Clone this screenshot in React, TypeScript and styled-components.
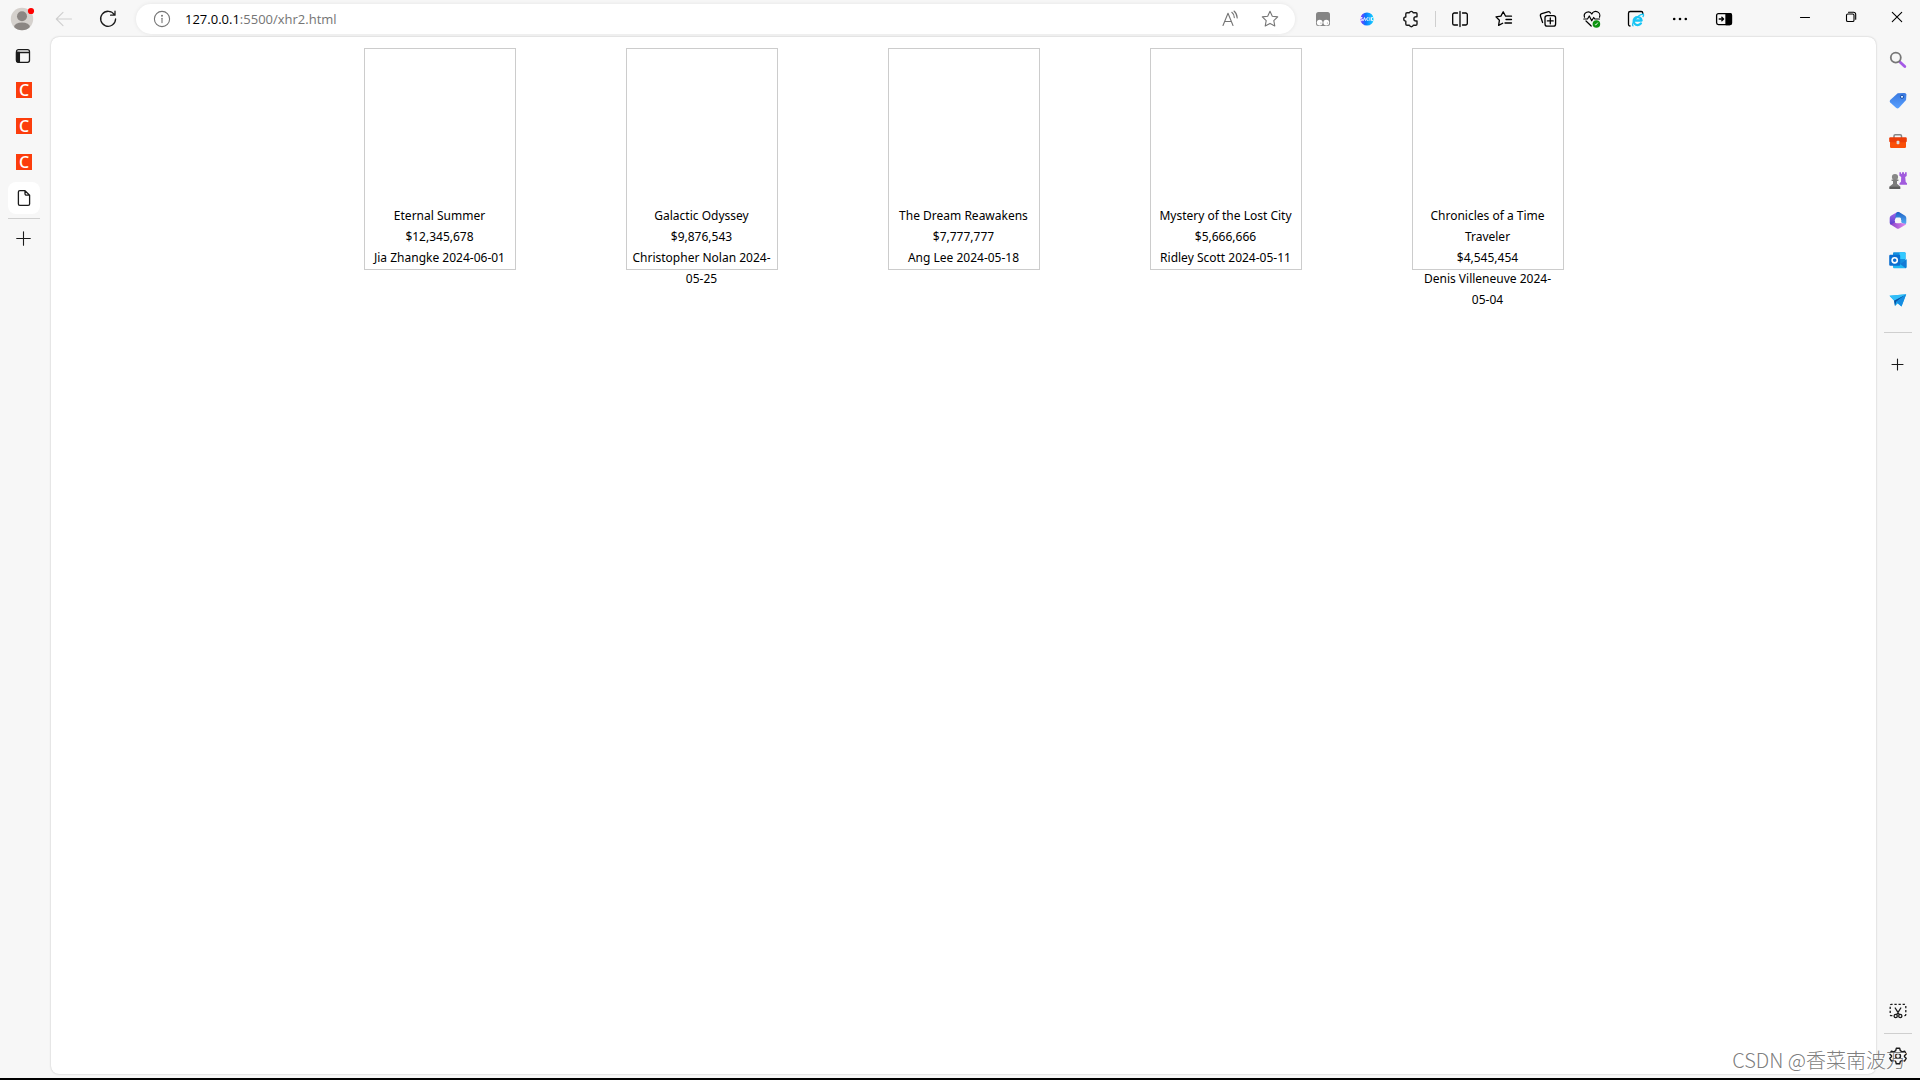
import React from "react";
import styled, { createGlobalStyle, css } from "styled-components";

const GlobalStyle = createGlobalStyle`
  *, *::before, *::after { box-sizing: border-box; }
  html, body, #root { height: 100%; }
  body {
    margin: 0;
    background: #f7f7f7;
    color: #000;
    font-family: "Noto Sans", "Noto Sans CJK SC", sans-serif;
    font-size: 12px;
  }
  button, input { font: inherit; }
`;

const Window = styled.div`
  position: relative;
  display: flex;
  flex-direction: column;
  height: 100vh;
  overflow: hidden;
  background: #f7f7f7;
  border-bottom: 2px solid #000;
`;

const TopBar = styled.header`
  display: flex;
  align-items: center;
  flex: none;
  height: 37px;
  padding: 1px 0 0 2px;
`;

const iconSlot = css`
  display: flex;
  align-items: center;
  justify-content: center;
  flex: none;
  padding: 0;
  border: 0;
  background: transparent;
  color: #1b1b1b;
`;

const ToolButton = styled.button<{ $tone?: string; $width?: number }>`
  ${iconSlot}
  width: ${(p) => p.$width ?? 44}px;
  height: 32px;
  color: ${(p) => p.$tone ?? "#1b1b1b"};
`;

const AddressBar = styled.label`
  display: flex;
  align-items: center;
  flex: 1;
  min-width: 0;
  height: 30px;
  margin: 0 6px;
  padding: 0 5px 0 6px;
  border-radius: 15px;
  background: #fff;
  box-shadow: 0 0 4px rgba(0, 0, 0, 0.08);
  font-family: "Open Sans", "Noto Sans", sans-serif;
  font-size: 13px;
`;

const Host = styled.span`
  color: #000;
`;

const AddressInput = styled.input`
  flex: 1;
  min-width: 0;
  padding: 0;
  border: 0;
  outline: 0;
  background: transparent;
  color: #757575;
`;

const InfoButton = styled(ToolButton)`
  margin-right: 3px;
`;

const ToolGroup = styled.div`
  display: flex;
  align-items: center;
`;

const ToolDivider = styled.span`
  width: 1px;
  height: 16px;
  margin: 0 2px;
  background: #cfcfcf;
`;

const WindowControls = styled.div`
  display: flex;
  margin-left: 36px;
  padding-bottom: 4px;
`;

const Body = styled.div`
  display: flex;
  flex: 1;
  min-height: 0;
`;

const TabRail = styled.nav`
  display: flex;
  flex-direction: column;
  flex: none;
  width: 51px;
  padding: 3px 11px 0 8px;
`;

const RailButton = styled.button<{ $active?: boolean }>`
  ${iconSlot}
  width: 32px;
  height: 32px;
  margin-bottom: 4px;
  border-radius: 8px;
  background: ${(p) => (p.$active ? "#fff" : "transparent")};
`;

const WorkspaceButton = styled(RailButton)`
  margin-bottom: 2px;
  padding-right: 2px;
`;

const RailDivider = styled.hr`
  width: 100%;
  height: 1px;
  margin: 0 0 4px;
  border: 0;
  background: #cfcfcf;
`;

const CsdnMark = styled.span`
  display: flex;
  align-items: center;
  justify-content: center;
  width: 16px;
  height: 16px;
  background: #fc3d0c;
  color: #fff;
  font-size: 16px;
  font-weight: 500;
  line-height: 16px;
`;

const Page = styled.main`
  flex: 1;
  min-width: 0;
  margin-bottom: 4px;
  padding-top: 11px;
  border-radius: 8px;
  background: #fff;
  box-shadow: 0 0 2px rgba(0, 0, 0, 0.25);
`;

const FilmList = styled.ul`
  display: flex;
  justify-content: center;
  gap: 110px;
  margin: 0;
  padding: 0;
  list-style: none;
`;

const FilmCard = styled.li`
  width: 152px;
  height: 222px;
  padding: 156px 3px 0;
  border: 1px solid #ccc;
  line-height: 21px;
  text-align: center;
`;

const FilmLine = styled.p`
  margin: 0;
`;

const AppRail = styled.aside`
  display: flex;
  flex-direction: column;
  align-items: center;
  flex: none;
  width: 44px;
  padding: 3px 0 2px;
`;

const AppButton = styled.button`
  ${iconSlot}
  width: 40px;
  height: 40px;
`;

const AppDivider = styled.hr<{ $gap: number }>`
  width: 28px;
  height: 1px;
  margin: ${(p) => p.$gap}px 0;
  border: 0;
  background: #cfcfcf;
`;

const Spacer = styled.div`
  flex: 1;
`;

const Watermark = styled.div`
  position: absolute;
  right: 14px;
  bottom: 2px;
  color: rgba(110, 110, 110, 0.9);
  font-family: "Noto Sans CJK SC", sans-serif;
  font-size: 20px;
  font-weight: 300;
  line-height: 32px;
  text-shadow: 1px 1px 0 rgba(255, 255, 255, 0.8);
  white-space: nowrap;
  pointer-events: none;
`;

type IconProps = { size?: number; width?: number; children: React.ReactNode };

const Icon = ({ size = 20, width = 1.1, children }: IconProps) => (
  <svg
    width={size}
    height={size}
    viewBox="0 0 20 20"
    fill="none"
    stroke="currentColor"
    strokeWidth={width}
    strokeLinecap="round"
    strokeLinejoin="round"
    aria-hidden="true"
  >
    {children}
  </svg>
);

const Avatar = () => (
  <svg width="26" height="26" viewBox="0 0 26 26" aria-hidden="true">
    <defs>
      <clipPath id="face">
        <circle cx="13" cy="13" r="11.2" />
      </clipPath>
    </defs>
    <circle cx="13" cy="13" r="11.2" fill="#d5d1cd" />
    <g clipPath="url(#face)" fill="#8b8683">
      <circle cx="13" cy="10.2" r="5" />
      <ellipse cx="13" cy="21.4" rx="8" ry="5" />
    </g>
    <circle cx="22" cy="5" r="3.1" fill="#f00" />
  </svg>
);

const BackIcon = () => (
  <Icon><path d="M17.5 10H2.5M9 3.3L2.3 10L9 16.7" /></Icon>
);
const ReloadIcon = () => (
  <Icon width={1.3}><path d="M16.4 5.7A7.5 7.5 0 1 0 17.6 10M17 2.2V6.2H12.6" /></Icon>
);
const InfoIcon = () => (
  <Icon><circle cx="10" cy="10" r="7.6" /><path d="M10 9.2V13.6" /><circle cx="10" cy="6.7" r=".45" fill="currentColor" /></Icon>
);
const ReadIcon = () => (
  <Icon><path d="M3 16.5L8 4.2L13 16.5M4.7 12.5H11.3M11.8 3.3A6.5 6.5 0 0 1 14.3 8.6M14 2A9.5 9.5 0 0 1 17.2 9" /></Icon>
);
const starPath = "M10 2.3L12.3 7.2L17.7 7.9L13.8 11.6L14.8 17L10 14.4L5.2 17L6.2 11.6L2.3 7.9L7.7 7.2Z";
const StarIcon = () => <Icon><path d={starPath} /></Icon>;
const MonkeyIcon = () => (
  <svg width="16" height="16" viewBox="0 0 16 16" aria-hidden="true">
    <rect x="1" y="1" width="14" height="14" rx="2.5" fill="#858585" />
    <circle cx="4.7" cy="11.6" r="2.9" fill="#fff" />
    <circle cx="11.3" cy="11.6" r="2.9" fill="#fff" />
    <circle cx="5.9" cy="12" r=".6" fill="#999" />
    <circle cx="12.4" cy="12" r=".6" fill="#999" />
  </svg>
);
const BubbleIcon = () => (
  <svg width="16" height="16" viewBox="0 0 16 16" aria-hidden="true">
    <defs>
      <linearGradient id="bubble" x1="0" y1="0" x2="1" y2="0">
        <stop stopColor="#8a32ff" />
        <stop offset=".4" stopColor="#0878ff" />
        <stop offset="1" stopColor="#18d5ff" />
      </linearGradient>
    </defs>
    <circle cx="8" cy="8" r="6.6" fill="url(#bubble)" />
    <path d="M1.5 9.7H3.3V8H1.8V6.5H3.4M4.3 9.8L5.5 6.6L6.7 9.8M9.6 6.8Q7.8 6.1 7.6 8Q7.7 10 9.6 9.3M10.9 6.3V9.8M13.8 6.5H12.5V9.6H14" fill="none" stroke="#fff" strokeWidth=".9" />
  </svg>
);
const PuzzleIcon = () => (
  <Icon width={1.4}><path d="M6 3.8H8.4A2 2 0 0 1 12.2 3.8H15A1 1 0 0 1 16 4.8V7.8H15A2 2 0 0 0 15 12H16V15A1.2 1.2 0 0 1 14.8 16.2H12.3A2 2 0 0 1 8.4 16.2H6A1.2 1.2 0 0 1 4.8 15V12.1A2 2 0 0 1 4.8 8V5A1.2 1.2 0 0 1 6 3.8Z" /></Icon>
);
const SplitIcon = () => (
  <Icon width={1.3}><path d="M10 2.5V17.5M7.5 4H4.3A1.6 1.6 0 0 0 2.7 5.6V14.4A1.6 1.6 0 0 0 4.3 16H7.5M12.5 4H15.7A1.6 1.6 0 0 1 17.3 5.6V14.4A1.6 1.6 0 0 1 15.7 16H12.5" /></Icon>
);
const FavoritesIcon = () => (
  <Icon width={1.3}><path d="M17.5 7.2H11.6L9.2 2.8L6.9 7.1L2 7.9L5.4 11.3L4.6 16.4L8.7 14.2M12 10.5H17.5M11 14H17.5" /></Icon>
);
const CollectionsIcon = () => (
  <Icon width={1.3}><rect x="7" y="6.6" width="10.6" height="10.6" rx="2.2" /><path d="M12.3 9V14.8M9.4 11.9H15.2M4.6 13.5L2.5 7.2A2 2 0 0 1 3.8 4.7L9.8 2.8A2 2 0 0 1 12.3 4.1" /></Icon>
);
const HealthIcon = () => (
  <Icon width={1.2}>
    <path d="M2.5 8.2A4 4 0 0 1 9.8 5A4 4 0 0 1 17.5 8.2M1.8 10H5.5L7.3 7L9.7 11.8L11.7 8.5L12.8 10H17.5M4 12L9.2 17" />
    <circle cx="14.4" cy="15" r="3.8" fill="#0b930f" stroke="none" />
    <path d="M13.2 15.6L13.8 16L15.6 13.9" stroke="#fff" strokeWidth=".9" />
  </Icon>
);
const ExplorerIcon = () => (
  <Icon width={1.3}>
    <path d="M16.8 5V4A1.6 1.6 0 0 0 15.2 2.5H4.3A1.8 1.8 0 0 0 2.5 4.3V15.4A1.6 1.6 0 0 0 4 17" />
    <path d="M8.3 11.5H15.6A4 4 0 1 0 14.9 14.4" stroke="#18c5f5" strokeWidth="2.3" />
    <path d="M7 16.8C4.8 15.2 11 6 17 5.2C18 5.4 17.6 6.7 17 7.5" stroke="#18c5f5" />
  </Icon>
);
const MoreIcon = () => (
  <Icon><g fill="currentColor" stroke="none"><circle cx="4.2" cy="10" r="1.3" /><circle cx="10" cy="10" r="1.3" /><circle cx="15.8" cy="10" r="1.3" /></g></Icon>
);
const SidebarIcon = () => (
  <Icon width={1.3}><rect x="2.6" y="4.6" width="14.8" height="11" rx="1.8" /><path d="M12 4.6H16A1.5 1.5 0 0 1 17.5 6V14A1.5 1.5 0 0 1 16 15.6H12Z" fill="currentColor" /><path d="M5.2 10H9.4M7.8 8.2L9.6 10L7.8 11.8" /></Icon>
);
const MinimizeIcon = () => <Icon><path d="M5.5 10.5H14.5" /></Icon>;
const RestoreIcon = () => (
  <Icon><rect x="5.5" y="7" width="7.5" height="7.5" rx="1.3" /><path d="M7.5 5.3H12.6A2.1 2.1 0 0 1 14.7 7.4V12.3" /></Icon>
);
const CloseIcon = () => <Icon><path d="M5.3 5.3L14.7 14.7M14.7 5.3L5.3 14.7" /></Icon>;

const WorkspaceIcon = () => (
  <Icon width={1.3}><rect x="3.5" y="3.7" width="13" height="12.6" rx="2" /><path d="M3.8 6.5H16.2" /><path d="M3.5 6.5H6.4V16H5A1.5 1.5 0 0 1 3.5 14.5Z" fill="currentColor" /></Icon>
);
const DocumentIcon = () => (
  <Icon width={1.3}><path d="M11 2.6H5.8A1.4 1.4 0 0 0 4.4 4V16A1.4 1.4 0 0 0 5.8 17.4H14.2A1.4 1.4 0 0 0 15.6 16V7.2L11 2.6V5.8A1.4 1.4 0 0 0 12.4 7.2H15.6" /></Icon>
);
const PlusIcon = ({ reach = 6.8 }: { reach?: number }) => (
  <Icon><path d={`M9.5 ${9.5 - reach}V${9.5 + reach}M${9.5 - reach} 9.5H${9.5 + reach}`} /></Icon>
);

const SearchIcon = () => (
  <Icon><path d="M12.2 12.2L16.8 16.6" stroke="#a55ae6" strokeWidth="2.8" /><circle cx="7.8" cy="7.6" r="5" stroke="#777" strokeWidth="1.8" /></Icon>
);
const TagIcon = () => (
  <svg width="20" height="20" viewBox="0 0 20 20" aria-hidden="true">
    <defs><linearGradient id="tag" x1="0" y1="0" x2="0" y2="1"><stop stopColor="#3978df" /><stop offset="1" stopColor="#58a0ff" /></linearGradient></defs>
    <path d="M9.7 3.2L16.3 2.9Q18.4 3 18.4 4.6L18.1 10.1L10.8 18Q9.5 19 8 17.8L2.2 12.4Q1.1 11.2 2.2 10Z" fill="url(#tag)" />
    <circle cx="14" cy="6.8" r="1.6" fill="#dceaff" stroke="#124dab" strokeWidth="1" />
  </svg>
);
const ToolboxIcon = () => (
  <svg width="20" height="20" viewBox="0 0 20 20" aria-hidden="true">
    <path d="M6 8V6Q6 4.7 7.3 4.7H12.2Q13.5 4.7 13.5 6V8" fill="none" stroke="#858585" strokeWidth="1.5" />
    <rect x="2" y="11" width="16" height="6.9" rx="1.2" fill="#fa4f08" />
    <rect x="1.2" y="7.3" width="17.6" height="5" rx="1.2" fill="#ec3d08" />
    <rect x="8.6" y="10.8" width="2.8" height="3.4" rx=".8" fill="#ddd" />
  </svg>
);
const ChessIcon = () => (
  <svg width="20" height="20" viewBox="0 0 20 20" aria-hidden="true">
    <path d="M11.4 2.2H13V3.7H14V2.2H16V3.7H17V2.2H18.7V5.9L17.2 6.9L17.7 11.9L19 13.2V14.7H11.5V13.2L13 11.7L13.2 7L11.4 5.7Z" fill="#a15bdd" />
    <circle cx="7" cy="7" r="3.1" fill="#888" />
    <path d="M3.6 9.4H10.4V11.1H9V13.7L12.2 16.5V18.9H1.5V16.5L5 13.7V11.1H3.6Z" fill="#7c7c7c" />
    <path d="M1.5 16.7H12.2V18.9H1.5Z" fill="#5b5b5b" />
  </svg>
);
const OfficeIcon = () => (
  <svg width="20" height="20" viewBox="0 0 20 20" aria-hidden="true">
    <defs>
      <linearGradient id="officeA" x2="0" y2="1"><stop stopColor="#a468ec" /><stop offset="1" stopColor="#5b3fce" /></linearGradient>
      <linearGradient id="officeB"><stop stopColor="#8440c8" /><stop offset="1" stopColor="#e58aec" /></linearGradient>
      <linearGradient id="officeC" x2="0" y2="1"><stop stopColor="#1d61c4" /><stop offset="1" stopColor="#5ab2f8" /></linearGradient>
    </defs>
    <path d="M10.4 1.8L7.5 8.4L6.6 14.6L3 14.8Q1.7 14.2 1.7 12.8V7.9Q1.7 6.5 2.9 5.8L8.9 2.2Q9.6 1.8 10.4 1.8Z" fill="url(#officeA)" />
    <path d="M9.4 2L11 2.1L17.1 5.8Q18.3 6.5 18.3 7.9V12.8Q18.3 14 17.1 14.8L13.4 12.4L12.7 7.8L7.5 8.4Q6.9 3.6 9.4 2Z" fill="url(#officeC)" />
    <path d="M2.3 14.2L6.8 12.8L12.3 13L17.9 13.8Q17.6 14.5 17.1 14.9L11.1 18.4Q10 19 8.9 18.4Z" fill="url(#officeB)" />
    <path d="M8.3 7.5H11.7L13.4 10.4L11.7 13.3H8.3L6.6 10.4Z" fill="#f7f7f7" />
  </svg>
);
const OutlookIcon = () => (
  <svg width="20" height="20" viewBox="0 0 20 20" aria-hidden="true">
    <rect x="5" y="2.3" width="12.5" height="12" rx="1" fill="#1490df" />
    <path d="M11.5 2.3H16.6Q17.5 2.3 17.5 3.3V9H11.5Z" fill="#32c9ff" />
    <path d="M5 9.3L12 14.3L18.5 9.3V17.1Q18.5 18.3 17.3 18.3H6Q5 18.3 5 17.3Z" fill="#20b8f4" />
    <path d="M12 14.1L18.5 9.3V17.3L17.8 18.3Z" fill="#147bd4" />
    <rect x="1.2" y="4.8" width="11" height="11" rx="1.1" fill="#0c6fd0" />
    <circle cx="6.7" cy="10.3" r="2.6" fill="none" stroke="#fff" strokeWidth="1.6" />
  </svg>
);
const DropIcon = () => (
  <svg width="20" height="20" viewBox="0 0 20 20" aria-hidden="true">
    <path d="M1.5 5.7L18.2 4.2L13.5 16.5L9.7 13.5L7 16L6 10.5Z" fill="#1daef1" />
    <path d="M6 10.5L18.2 4.2L8.3 11.8L7 16Z" fill="#0a53a5" />
    <path d="M8.3 11.8L18.2 4.2L13.5 16.5Z" fill="#168ce1" />
    <path d="M1.5 5.7L18.2 4.2L6 10.5Z" fill="#32bef8" />
  </svg>
);
const SnipIcon = () => (
  <Icon width={1.3}>
    <path d="M4.4 14.7H3.4A1.2 1.2 0 0 1 2.2 13.5V4.5A1.2 1.2 0 0 1 3.4 3.3H16.6A1.2 1.2 0 0 1 17.8 4.5V13.5A1.2 1.2 0 0 1 16.6 14.7H15.5" strokeDasharray="2.3 1.8" strokeLinecap="butt" />
    <path d="M7.2 7L11.2 13.4M12.8 7L8.8 13.4" /><circle cx="7.7" cy="15" r="1.6" /><circle cx="12.3" cy="15" r="1.6" />
  </Icon>
);
const GearIcon = () => (
  <Icon width={1.4}><path d="M8.3 2.3H11.7L12.3 4.7L14.2 5.8L16.6 5.1L18.2 8L16.5 9.8V10.8L18.2 12.3L16.5 15.1L14 14.5L12.4 15.4L11.7 17.8H8.3L7.6 15.4L6 14.5L3.5 15.1L1.8 12.3L3.5 10.8V9.8L1.8 8L3.4 5.1L5.8 5.8L7.7 4.7Z" /><circle cx="10" cy="10.1" r="2.5" /></Icon>
);

const films = [
  { title: "Eternal Summer", gross: "$12,345,678", director: "Jia Zhangke", date: "2024-06-01" },
  { title: "Galactic Odyssey", gross: "$9,876,543", director: "Christopher Nolan", date: "2024-05-25" },
  { title: "The Dream Reawakens", gross: "$7,777,777", director: "Ang Lee", date: "2024-05-18" },
  { title: "Mystery of the Lost City", gross: "$5,666,666", director: "Ridley Scott", date: "2024-05-11" },
  { title: "Chronicles of a Time Traveler", gross: "$4,545,454", director: "Denis Villeneuve", date: "2024-05-04" },
];

const extensions = [
  { name: "Tampermonkey", icon: <MonkeyIcon /> },
  { name: "Translator", icon: <BubbleIcon /> },
  { name: "Extensions", icon: <PuzzleIcon /> },
];

const tools = [
  { name: "Split screen", icon: <SplitIcon /> },
  { name: "Favorites", icon: <FavoritesIcon /> },
  { name: "Collections", icon: <CollectionsIcon /> },
  { name: "Browser essentials", icon: <HealthIcon /> },
  { name: "Internet Explorer mode", icon: <ExplorerIcon /> },
  { name: "Settings and more", icon: <MoreIcon /> },
  { name: "Sidebar", icon: <SidebarIcon /> },
];

const windowActions = [
  { name: "Minimize", icon: <MinimizeIcon /> },
  { name: "Restore", icon: <RestoreIcon /> },
  { name: "Close", icon: <CloseIcon /> },
];

const apps = [
  { name: "Search", icon: <SearchIcon /> },
  { name: "Shopping", icon: <TagIcon /> },
  { name: "Tools", icon: <ToolboxIcon /> },
  { name: "Games", icon: <ChessIcon /> },
  { name: "Microsoft 365", icon: <OfficeIcon /> },
  { name: "Outlook", icon: <OutlookIcon /> },
  { name: "Drop", icon: <DropIcon /> },
];

export default function App() {
  return (
    <>
      <GlobalStyle />
      <Window>
        <TopBar>
          <ToolButton $width={40} aria-label="Profile"><Avatar /></ToolButton>
          <ToolButton $tone="#cfcfcf" aria-label="Back"><BackIcon /></ToolButton>
          <ToolButton aria-label="Reload"><ReloadIcon /></ToolButton>
          <AddressBar>
            <InfoButton $width={40} $tone="#757575" aria-label="Site information"><InfoIcon /></InfoButton>
            <Host>127.0.0.1</Host>
            <AddressInput aria-label="Address" defaultValue=":5500/xhr2.html" />
            <ToolButton $width={40} $tone="#757575" aria-label="Read aloud"><ReadIcon /></ToolButton>
            <ToolButton $width={40} $tone="#757575" aria-label="Add to favorites"><StarIcon /></ToolButton>
          </AddressBar>
          <ToolGroup>
            {extensions.map((t) => (
              <ToolButton key={t.name} aria-label={t.name}>{t.icon}</ToolButton>
            ))}
            <ToolDivider />
            {tools.map((t) => (
              <ToolButton key={t.name} $tone="#000" aria-label={t.name}>{t.icon}</ToolButton>
            ))}
          </ToolGroup>
          <WindowControls>
            {windowActions.map((t) => (
              <ToolButton key={t.name} $width={46} $tone="#000" aria-label={t.name}>{t.icon}</ToolButton>
            ))}
          </WindowControls>
        </TopBar>
        <Body>
          <TabRail aria-label="Tabs">
            <WorkspaceButton aria-label="Tab actions"><WorkspaceIcon /></WorkspaceButton>
            {[1, 2, 3].map((n) => (
              <RailButton key={n} aria-label={`CSDN tab ${n}`}><CsdnMark>C</CsdnMark></RailButton>
            ))}
            <RailButton $active aria-label="xhr2.html"><DocumentIcon /></RailButton>
            <RailDivider />
            <RailButton aria-label="New tab"><PlusIcon /></RailButton>
          </TabRail>
          <Page>
            <FilmList>
              {films.map((f) => (
                <FilmCard key={f.title}>
                  <FilmLine>{f.title}</FilmLine>
                  <FilmLine>{f.gross}</FilmLine>
                  <FilmLine>{`${f.director} ${f.date}`}</FilmLine>
                </FilmCard>
              ))}
            </FilmList>
          </Page>
          <AppRail aria-label="Sidebar apps">
            {apps.map((a) => (
              <AppButton key={a.name} aria-label={a.name}>{a.icon}</AppButton>
            ))}
            <AppDivider $gap={12} />
            <AppButton aria-label="Customize"><PlusIcon reach={5.5} /></AppButton>
            <Spacer />
            <AppButton aria-label="Screenshot"><SnipIcon /></AppButton>
            <AppDivider $gap={2} />
            <AppButton aria-label="Settings"><GearIcon /></AppButton>
          </AppRail>
        </Body>
        <Watermark>CSDN @香菜南波万</Watermark>
      </Window>
    </>
  );
}
